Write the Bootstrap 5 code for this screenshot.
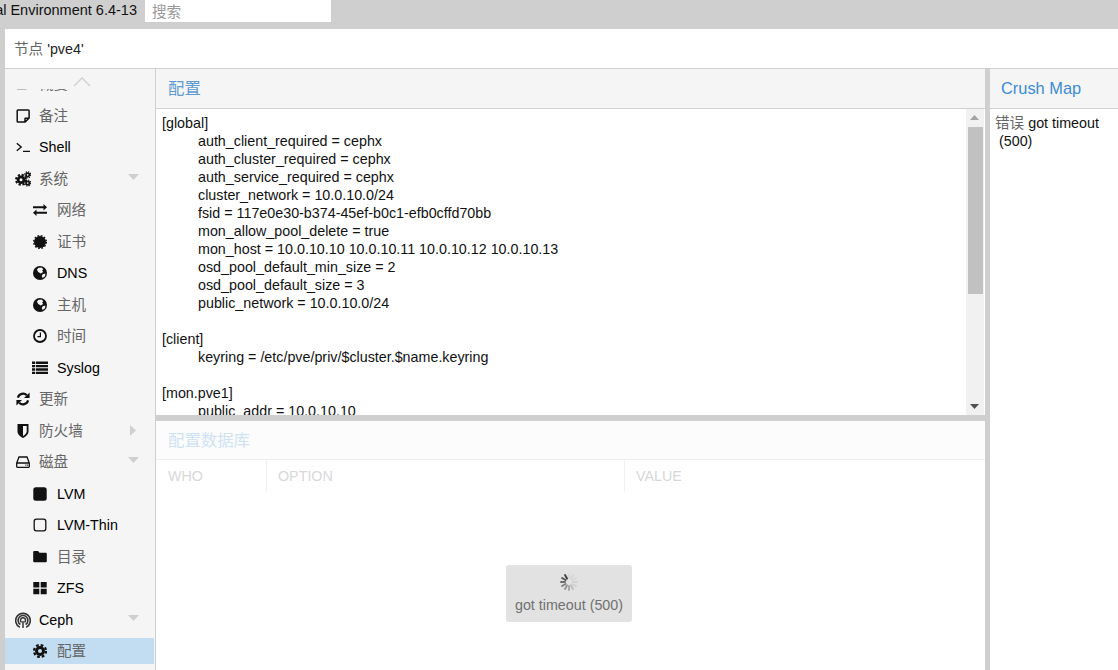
<!DOCTYPE html>
<html lang="zh">
<head>
<meta charset="utf-8">
<title>Proxmox</title>
<link href="https://cdn.jsdelivr.net/npm/bootstrap@5.3.0/dist/css/bootstrap.min.css" rel="stylesheet">
<style>
html,body{height:670px;overflow:hidden;}
body{background:#cfcfcf;font:14.3px/18px "Liberation Sans","Noto Sans CJK SC",sans-serif;color:#000;}
.cj{color:#666;font-size:14.6px;}
.top-strip{height:29px;}
.brand-clip{width:145px;height:22px;white-space:nowrap;overflow:hidden;padding-right:8px;font-size:14.5px;line-height:20px;color:#111;}
.find-box{width:186px;height:22px;background:#fff;padding:3px 7px;color:#999;line-height:18px;}
.work{margin-left:5px;height:641px;background:#fff;}
.node-head{height:40px;padding:11px 9px;border-bottom:1px solid #cfcfcf;color:#222;}
.work-body{height:601px;}
.side{width:151px;background:#f5f5f5;border-right:1px solid #cfcfcf;padding-top:2px;overflow:hidden;}
.side-cap{left:0;top:0;width:150px;height:20px;background:#f5f5f5;}
.side-cap svg{position:absolute;left:68px;top:8px;}
.nv-row{height:26px;margin-bottom:6px;margin-right:1px;padding-left:11px;}
.nv-row:nth-child(even){margin-bottom:5px;}
.nv-row.nv-sub{padding-left:28px;}
.nv-row.nv-sub .nv-ico{margin-right:10px;}
.nv-row.nv-on{background:#c2ddf2;margin-top:1px;}
.nv-ico{width:14px;height:14px;margin-right:9px;flex:none;display:block;}
.nv-row .nv-wide{width:16px;height:16px;margin-left:-1px;margin-right:8px;}
.nv-row.nv-sub .nv-wide{margin-right:9px;}
.nv-arrow{right:15px;top:8px;}
.centre{width:829px;}
.pane-head{height:40px;background:#f5f5f5;border-bottom:1px solid #cfcfcf;font-size:16.4px;line-height:39px;padding-left:12px;color:#5f9bd3;}
.conf-view{height:306px;}
.conf-text{margin:0;padding:5px 0 0 6px;font:14.3px/18px "Liberation Sans",sans-serif;tab-size:36px;color:#111;white-space:pre;height:306px;overflow:hidden;}
.sbar{width:18px;background:#f1f1f1;right:1px;top:0;bottom:0;}
.sbar-thumb{left:2px;right:1px;top:18px;height:167px;background:#c1c1c1;}
.sbar svg{position:absolute;left:4px;}
.split-h{height:6px;background:#cfcfcf;}
.split-v{width:5px;background:#cfcfcf;}
.db-pane{height:249px;}
.db-head{height:39px;border-bottom:1px solid #f0f0f0;background:#fcfcfc;font-size:16.4px;line-height:38px;padding-left:12px;color:#cfe3f4;}
.db-cols{height:32px;color:#d8d8d8;line-height:32px;}
.db-col{padding-left:12px;border-right:1px solid #f0f0f0;}
.db-col.w-opt{padding-left:11px;}
.db-col.w-val{padding-left:11px;}
.w-who{width:111px;}
.w-opt{width:358px;}
.wait-box{left:350px;top:144px;width:126px;height:57px;background:#e2e2e2;border-radius:3px;color:#707070;text-align:center;padding-top:7px;}
.wait-box svg{display:block;margin:0 auto 4px;}
.crush{flex:1;min-width:0;}
.crush .pane-head{color:#3b8bd8;padding-left:11px;}
.crush-msg{padding:5px 0 0 5px;color:#111;white-space:nowrap;}
.crush-msg .cont{padding-left:4px;display:block;}
</style>
</head>
<body>
<svg width="0" height="0" class="d-block position-absolute">
<defs>
<symbol id="i-book" viewBox="0 0 14 14"><path d="M1 11.500h9.500M2 1h9v8H2z" fill="none" stroke="#111" stroke-width="1.300"/></symbol>
<symbol id="i-note" viewBox="0 0 14 14"><path d="M2 1h10.300a.8.8 0 0 1 .8.8v7.200l-3.900 4H2a.8.8 0 0 1-.8-.8V1.800A.8.8 0 0 1 2 1zM12.800 9.200H9.500a.5.5 0 0 0-.5.5v3" fill="none" stroke="#111" stroke-width="1.500"/></symbol>
<symbol id="i-term" viewBox="0 0 14 14"><path d="M.8 3.200l4.400 3.800-4.400 3.800M7 11.400h7" fill="none" stroke="#111" stroke-width="1.400"/></symbol>
<symbol id="i-cogs" viewBox="0 0 16 16"><g fill="none" stroke="#111"><circle cx="6" cy="8.800" r="2.900" stroke-width="2.800"/><circle cx="6" cy="8.800" r="5" stroke-width="2" stroke-dasharray="2.300 1.630"/><circle cx="12.700" cy="3.800" r="1.700" stroke-width="1.700"/><circle cx="12.700" cy="3.800" r="3" stroke-width="1.200" stroke-dasharray="1.300 1.050"/><circle cx="12.700" cy="12" r="1.700" stroke-width="1.700"/><circle cx="12.700" cy="12" r="3" stroke-width="1.200" stroke-dasharray="1.300 1.050"/></g></symbol>
<symbol id="i-swap" viewBox="0 0 14 14"><path d="M0 3.300h10.500V1L14 4.300l-3.500 3.200V5.300H0zM14 8.700H3.500V6.500L0 9.700 3.500 13v-2.300H14z" fill="#111"/></symbol>
<symbol id="i-cert" viewBox="0 0 14 14"><circle cx="7" cy="7" r="6" fill="#111"/><circle cx="7" cy="7" r="6.300" fill="none" stroke="#111" stroke-width="1.500" stroke-dasharray="1.650 1.650"/></symbol>
<symbol id="i-globe" viewBox="0 0 14 14"><circle cx="7" cy="7" r="7" fill="#111"/><path d="M5.200 1.900l3.100-.5 2 1.500-1.100 1.500 1 1.700-2.400 1.500-2.600-1.700L3.900 3.800zM9.800 8.300l2.600-.9-.4 2.900-2.300 1.800-1-2.100z" fill="#f5f5f5"/></symbol>
<symbol id="i-clock" viewBox="0 0 14 14"><circle cx="7" cy="7" r="6" fill="none" stroke="#111" stroke-width="1.800"/><path d="M7.400 3.500v4.100H4.400" fill="none" stroke="#111" stroke-width="1.200"/></symbol>
<symbol id="i-list" viewBox="0 0 16 14"><path d="M0 1.700h16M0 5.100h16M0 8.500h16M0 11.900h16" stroke="#111" stroke-width="2.400"/><path d="M3.500 0v14" stroke="#f5f5f5" stroke-width=".8"/></symbol>
<symbol id="i-sync" viewBox="0 0 14 14"><path d="M1.900 5.600A5.300 5.300 0 0 1 10.800 3.300M12.100 8.400A5.300 5.300 0 0 1 3.200 10.700" fill="none" stroke="#111" stroke-width="2.200"/><path d="M13.600.4v5.600H8zM.4 13.600V8H6z" fill="#111"/></symbol>
<symbol id="i-shield" viewBox="0 0 14 14"><path d="M1.500 0h11v7.200c0 3.300-2.800 5.400-5.500 6.800-2.700-1.400-5.500-3.500-5.500-6.800z" fill="#111"/><path d="M7 2h3.700v5.300c0 2.200-2 3.800-3.700 4.700z" fill="#f5f5f5"/></symbol>
<symbol id="i-hdd" viewBox="0 0 14 14"><path d="M.7 8L3 2h8l2.300 6v3.600a.7.700 0 0 1-.7.700H1.400a.7.700 0 0 1-.7-.7zM.7 8h12.600" fill="none" stroke="#111" stroke-width="1.300"/><path d="M9.400 10.200h1M11.200 10.200h.9" stroke="#111" stroke-width="1.200"/></symbol>
<symbol id="i-blk" viewBox="0 0 14 14"><rect x=".3" y=".3" width="13.400" height="13.400" rx="2.500" fill="#111"/></symbol>
<symbol id="i-hol" viewBox="0 0 14 14"><rect x="1.200" y="1.200" width="11.600" height="11.600" rx="2.200" fill="none" stroke="#111" stroke-width="1.300"/></symbol>
<symbol id="i-dir" viewBox="0 0 14 14"><path d="M1.200 1h3.900l1.400 1.700h6.300a1 1 0 0 1 1 1v7.600a1 1 0 0 1-1 1H1.200a1 1 0 0 1-1-1V2a1 1 0 0 1 1-1z" fill="#111"/></symbol>
<symbol id="i-grid" viewBox="0 0 14 14"><path d="M.3 1h6v5.500h-6zM7.700 1h6v5.500h-6zM.3 7.800h6v5.500h-6zM7.700 7.800h6v5.500h-6z" fill="#111"/></symbol>
<symbol id="i-ceph" viewBox="0 0 16 16"><g fill="none" stroke="#333"><path d="M4.800 15.200A7.300 7.300 0 1 1 11.200 15.200" stroke-width="1.600"/><path d="M5.400 12.500A4.900 4.900 0 1 1 10.600 12.500" stroke-width="1.600"/><path d="M6.600 10.300A2.500 2.500 0 1 1 9.400 10.300" stroke-width="1.500"/><path d="M8 9v7" stroke-width="1.500"/></g></symbol>
<symbol id="i-gear" viewBox="0 0 14 14"><circle cx="7" cy="7" r="3.500" fill="none" stroke="#111" stroke-width="3"/><circle cx="7" cy="7" r="6" fill="none" stroke="#111" stroke-width="2.200" stroke-dasharray="2.700 2.010"/></symbol>
</defs>
</svg>

<div class="top-strip d-flex">
  <div class="brand-clip d-flex justify-content-end">Proxmox Virtual Environment 6.4-13</div>
  <div class="find-box cj">搜索</div>
</div>

<div class="work d-flex flex-column">
  <div class="node-head"><span class="cj">节点</span> 'pve4'</div>
  <div class="work-body d-flex">
    <div class="side position-relative">
      <div class="nv-row d-flex align-items-center"><svg class="nv-ico"><use href="#i-book"/></svg><span class="cj">概要</span></div>
      <div class="nv-row d-flex align-items-center"><svg class="nv-ico"><use href="#i-note"/></svg><span class="cj">备注</span></div>
      <div class="nv-row d-flex align-items-center"><svg class="nv-ico"><use href="#i-term"/></svg><span>Shell</span></div>
      <div class="nv-row d-flex align-items-center position-relative"><svg class="nv-ico nv-wide"><use href="#i-cogs"/></svg><span class="cj">系统</span><svg class="nv-arrow position-absolute" width="11" height="6"><path d="M0 0h11L5.500 6z" fill="#cfcfcf"/></svg></div>
      <div class="nv-row nv-sub d-flex align-items-center"><svg class="nv-ico"><use href="#i-swap"/></svg><span class="cj">网络</span></div>
      <div class="nv-row nv-sub d-flex align-items-center"><svg class="nv-ico"><use href="#i-cert"/></svg><span class="cj">证书</span></div>
      <div class="nv-row nv-sub d-flex align-items-center"><svg class="nv-ico"><use href="#i-globe"/></svg><span>DNS</span></div>
      <div class="nv-row nv-sub d-flex align-items-center"><svg class="nv-ico"><use href="#i-globe"/></svg><span class="cj">主机</span></div>
      <div class="nv-row nv-sub d-flex align-items-center"><svg class="nv-ico"><use href="#i-clock"/></svg><span class="cj">时间</span></div>
      <div class="nv-row nv-sub d-flex align-items-center"><svg class="nv-ico nv-wide"><use href="#i-list"/></svg><span>Syslog</span></div>
      <div class="nv-row d-flex align-items-center"><svg class="nv-ico"><use href="#i-sync"/></svg><span class="cj">更新</span></div>
      <div class="nv-row d-flex align-items-center position-relative"><svg class="nv-ico"><use href="#i-shield"/></svg><span class="cj">防火墙</span><svg class="nv-arrow position-absolute" style="right:18px;top:7px" width="6" height="11"><path d="M0 0l6 5.500L0 11z" fill="#cfcfcf"/></svg></div>
      <div class="nv-row d-flex align-items-center position-relative"><svg class="nv-ico"><use href="#i-hdd"/></svg><span class="cj">磁盘</span><svg class="nv-arrow position-absolute" width="11" height="6"><path d="M0 0h11L5.500 6z" fill="#cfcfcf"/></svg></div>
      <div class="nv-row nv-sub d-flex align-items-center"><svg class="nv-ico"><use href="#i-blk"/></svg><span>LVM</span></div>
      <div class="nv-row nv-sub d-flex align-items-center"><svg class="nv-ico"><use href="#i-hol"/></svg><span>LVM-Thin</span></div>
      <div class="nv-row nv-sub d-flex align-items-center"><svg class="nv-ico"><use href="#i-dir"/></svg><span class="cj">目录</span></div>
      <div class="nv-row nv-sub d-flex align-items-center"><svg class="nv-ico"><use href="#i-grid"/></svg><span>ZFS</span></div>
      <div class="nv-row d-flex align-items-center position-relative"><svg class="nv-ico nv-wide"><use href="#i-ceph"/></svg><span>Ceph</span><svg class="nv-arrow position-absolute" width="11" height="6"><path d="M0 0h11L5.500 6z" fill="#cfcfcf"/></svg></div>
      <div class="nv-row nv-sub nv-on d-flex align-items-center"><svg class="nv-ico"><use href="#i-gear"/></svg><span class="cj">配置</span></div>
      <div class="side-cap position-absolute"><svg width="18" height="10"><path d="M1 9l8-8 8 8" fill="none" stroke="#d2d2d2" stroke-width="1.500"/></svg></div>
    </div>

    <div class="centre d-flex flex-column">
      <div class="pane-head">配置</div>
      <div class="conf-view position-relative">
<pre class="conf-text">[global]
	auth_client_required = cephx
	auth_cluster_required = cephx
	auth_service_required = cephx
	cluster_network = 10.0.10.0/24
	fsid = 117e0e30-b374-45ef-b0c1-efb0cffd70bb
	mon_allow_pool_delete = true
	mon_host = 10.0.10.10 10.0.10.11 10.0.10.12 10.0.10.13
	osd_pool_default_min_size = 2
	osd_pool_default_size = 3
	public_network = 10.0.10.0/24

[client]
	keyring = /etc/pve/priv/$cluster.$name.keyring

[mon.pve1]
	public_addr = 10.0.10.10</pre>
        <div class="sbar position-absolute">
          <svg class="position-absolute" style="top:6px" width="9" height="5"><path d="M0 5h9L4.500 0z" fill="#a3a3a3"/></svg>
          <div class="sbar-thumb position-absolute"></div>
          <svg class="position-absolute" style="bottom:6px" width="9" height="5"><path d="M0 0h9L4.500 5z" fill="#505050"/></svg>
        </div>
      </div>
      <div class="split-h"></div>
      <div class="db-pane position-relative">
        <div class="db-head">配置数据库</div>
        <div class="db-cols d-flex">
          <div class="db-col w-who">WHO</div>
          <div class="db-col w-opt">OPTION</div>
          <div class="db-col w-val border-0">VALUE</div>
        </div>
        <div class="wait-box position-absolute">
          <svg width="20" height="20" viewBox="0 0 20 20"><g stroke-width="2" stroke-linecap="round">
            <path d="M10 2v4" stroke="#d6d6d6" transform="rotate(30 10 10)"/>
            <path d="M10 2v4" stroke="#d6d6d6" transform="rotate(60 10 10)"/>
            <path d="M10 2v4" stroke="#d2d2d2" transform="rotate(90 10 10)"/>
            <path d="M10 2v4" stroke="#cfcfcf" transform="rotate(120 10 10)"/>
            <path d="M10 2v4" stroke="#bdbdbd" transform="rotate(150 10 10)"/>
            <path d="M10 2v4" stroke="#a8a8a8" transform="rotate(180 10 10)"/>
            <path d="M10 2v4" stroke="#969696" transform="rotate(210 10 10)"/>
            <path d="M10 2v4" stroke="#808080" transform="rotate(240 10 10)"/>
            <path d="M10 2v4" stroke="#6c6c6c" transform="rotate(270 10 10)"/>
            <path d="M10 2v4" stroke="#555" transform="rotate(300 10 10)"/>
            <path d="M10 2v4" stroke="#444" transform="rotate(330 10 10)"/>
            <path d="M10 2v4" stroke="#dadada"/>
          </g></svg>
          got timeout (500)
        </div>
      </div>
    </div>

    <div class="split-v"></div>

    <div class="crush">
      <div class="pane-head">Crush Map</div>
      <div class="crush-msg"><span class="cj">错误</span> got timeout<span class="cont">(500)</span></div>
    </div>
  </div>
</div>
<script src="https://cdn.jsdelivr.net/npm/bootstrap@5.3.0/dist/js/bootstrap.bundle.min.js"></script>
</body>
</html>
